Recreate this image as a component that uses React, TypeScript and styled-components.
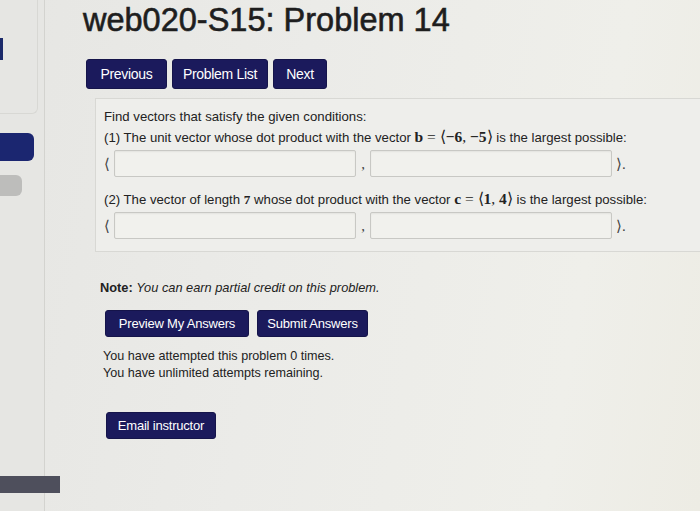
import React from 'react'
import styled, { createGlobalStyle } from 'styled-components'

const GlobalStyle = createGlobalStyle`
  html, body {
    margin: 0;
    padding: 0;
    width: 700px;
    height: 511px;
    overflow: hidden;
    background: #e9e9e6;
    font-family: 'Liberation Sans', Arial, sans-serif;
  }
`

const Page = styled.div`
  width: 700px;
  height: 511px;
  display: flex;
  background: linear-gradient(100deg, #e6e6e3 0%, #ebebe8 40%, #efefea 80%, #edece4 100%);
`

const Sidebar = styled.aside`
  width: 44px;
  flex-shrink: 0;
  display: flex;
  flex-direction: column;
  border-right: 1px solid #d3d3cf;
  background: #e6e6e3;
`

const SideTop = styled.div`
  height: 114px;
  padding-top: 38px;
  box-sizing: border-box;
  border-bottom: 1px solid #d8d8d4;
  border-right: 1px solid #d8d8d4;
  border-bottom-right-radius: 6px;
  width: 38px;
`

const SideMark = styled.div<{ $w: number; $h: number; $bg: string; $r?: number }>`
  width: ${p => p.$w}px;
  height: ${p => p.$h}px;
  background: ${p => p.$bg};
  border-radius: 0 ${p => p.$r ?? 6}px ${p => p.$r ?? 6}px 0;
`

const SideNav = styled.div`
  display: flex;
  flex-direction: column;
  gap: 14px;
  padding-top: 19px;
  flex: 1;
`

const SideFoot = styled.div`
  padding-bottom: 18px;
`

const Main = styled.main`
  flex: 1;
  padding: 2px 0 0 38px;
  color: #222;
`

const Title = styled.h1`
  margin: 0;
  font-size: 32.5px;
  font-weight: normal;
  -webkit-text-stroke: 0.6px #1e1e1e;
  color: #1e1e1e;
  line-height: 36px;
`

const NavRow = styled.div`
  display: flex;
  gap: 5px;
  margin-top: 21px;
  margin-left: 3px;
`

const Btn = styled.button<{ $w: number }>`
  width: ${p => p.$w}px;
  height: 30px;
  background: #1b1a5c;
  color: #fff;
  border: 1px solid #15144a;
  border-radius: 3px;
  font-family: 'Liberation Sans', Arial, sans-serif;
  font-size: 14px;
  letter-spacing: -0.3px;
  padding: 0;
`

const SmallBtn = styled(Btn)`
  height: 27px;
  font-size: 13px;
  letter-spacing: -0.2px;
`

const ProblemBox = styled.section`
  margin: 9px 0 0 12px;
  padding: 8px 0 12px 8px;
  background: #eeeeeb;
  border: 1px solid #d8d8d4;
  border-right: none;
  font-size: 13.2px;
  line-height: 20px;
`

const Line = styled.div`
  white-space: nowrap;
`

const Math = styled.span`
  font-family: 'Liberation Serif', 'Times New Roman', serif;
  font-size: 15.5px;
`

const B = styled.b`
  font-family: 'Liberation Serif', 'Times New Roman', serif;
`

const AnswerRow = styled.div`
  display: flex;
  align-items: center;
  gap: 4px;
  margin: 2px 0 12px;
  font-family: 'Liberation Serif', serif;
  font-size: 15px;
  color: #444;

  &:last-child {
    margin-bottom: 0;
  }
`

const Input = styled.div`
  width: 240px;
  height: 25px;
  border: 1px solid #c8c8c4;
  border-radius: 2px;
  background: #f1f1ed;
  box-shadow: inset 0 1px 2px rgba(0, 0, 0, 0.06);
`

const Sep = styled.span`
  width: 6px;
  text-align: center;
`

const Note = styled.p`
  margin: 28px 0 0 17px;
  font-size: 12.8px;
  line-height: 15px;
  color: #222;
`

const Row = styled.div`
  display: flex;
  gap: 8px;
  margin: 15px 0 0 22px;
`

const Attempts = styled.p`
  margin: 11px 0 0 20px;
  font-size: 12.6px;
  line-height: 17px;
  color: #222;
`

const EmailRow = styled.div`
  margin: 30px 0 0 23px;
`

export default function App() {
  return (
    <>
      <GlobalStyle />
      <Page>
        <Sidebar>
          <SideTop>
            <SideMark $w={3} $h={22} $bg="#1b2a6a" $r={0} />
          </SideTop>
          <SideNav>
            <SideMark $w={34} $h={28} $bg="#1b2670" />
            <SideMark $w={22} $h={21} $bg="#bdbdbb" />
          </SideNav>
          <SideFoot>
            <SideMark $w={60} $h={17} $bg="#4e4f5c" $r={0} />
          </SideFoot>
        </Sidebar>
        <Main>
          <Title>web020-S15: Problem 14</Title>
          <NavRow>
            <Btn $w={81}>Previous</Btn>
            <Btn $w={96}>Problem List</Btn>
            <Btn $w={54}>Next</Btn>
          </NavRow>
          <ProblemBox>
            <Line>Find vectors that satisfy the given conditions:</Line>
            <Line>
              (1) The unit vector whose dot product with the vector <Math><B>b</B> = ⟨<B>−6</B>, <B>−5</B>⟩</Math> is the largest possible:
            </Line>
            <AnswerRow>
              <span>⟨</span>
              <Input />
              <Sep>,</Sep>
              <Input />
              <span>⟩.</span>
            </AnswerRow>
            <Line>
              (2) The vector of length <B>7</B> whose dot product with the vector <Math><B>c</B> = ⟨<B>1</B>, <B>4</B>⟩</Math> is the largest possible:
            </Line>
            <AnswerRow>
              <span>⟨</span>
              <Input />
              <Sep>,</Sep>
              <Input />
              <span>⟩.</span>
            </AnswerRow>
          </ProblemBox>
          <Note>
            <b>Note:</b> <i>You can earn partial credit on this problem.</i>
          </Note>
          <Row>
            <SmallBtn $w={144}>Preview My Answers</SmallBtn>
            <SmallBtn $w={111}>Submit Answers</SmallBtn>
          </Row>
          <Attempts>
            You have attempted this problem 0 times.
            <br />
            You have unlimited attempts remaining.
          </Attempts>
          <EmailRow>
            <SmallBtn $w={110}>Email instructor</SmallBtn>
          </EmailRow>
        </Main>
      </Page>
    </>
  )
}
